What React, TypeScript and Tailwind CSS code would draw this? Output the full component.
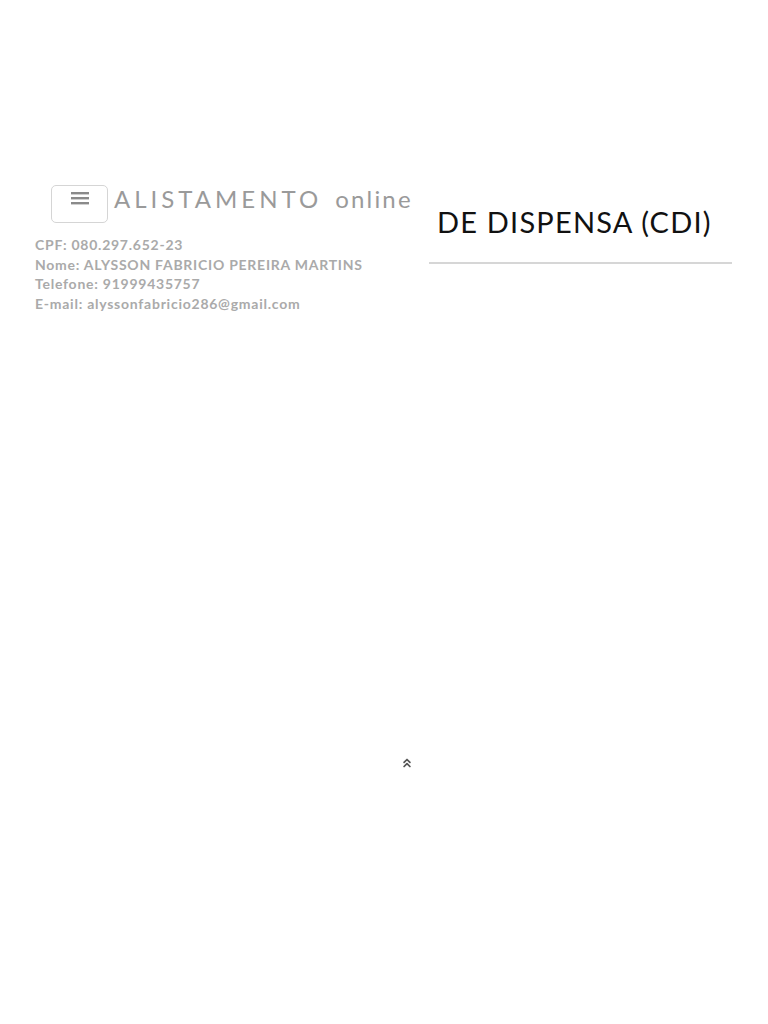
import { ChevronsUp } from 'lucide-react'

export default function App() {
  return (
    <div className="min-h-[1024px] bg-white" style={{ fontFamily: 'Lato, "Open Sans", sans-serif' }}>
      <div className="flex pt-[185px] pl-[35px]">
        {/* Left column */}
        <div className="w-[394px] shrink-0">
          <div className="flex items-start pl-[16px]">
            <button className="w-[57px] h-[38px] rounded-[5px] border border-[#d5d5d5] flex items-start justify-center pt-[4px]">
              <svg width="18" height="16" viewBox="0 0 18 16">
                <rect x="0" y="2" width="18" height="2.4" fill="#8a8a8a" />
                <rect x="0" y="7" width="18" height="2.4" fill="#8a8a8a" />
                <rect x="0" y="12" width="18" height="2.4" fill="#8a8a8a" />
              </svg>
            </button>
            <div className="ml-[6px] -mt-[1px] text-[24px] leading-[30px] text-[#9a9a9a] whitespace-nowrap">
              <span className="tracking-[4px]">ALISTAMENTO</span>
              <span className="ml-[13px] tracking-[2.2px]">online</span>
            </div>
          </div>
          <div className="mt-[12px] text-[14px] leading-[19.5px] font-bold tracking-[0.75px] text-[#aaaaaa]">
            <p>CPF: 080.297.652-23</p>
            <p>Nome: ALYSSON FABRICIO PEREIRA MARTINS</p>
            <p>Telefone: 91999435757</p>
            <p>E-mail: alyssonfabricio286@gmail.com</p>
          </div>
        </div>

        {/* Right column */}
        <div className="w-[303px] shrink-0 pt-[19px]">
          <h1 className="pl-[8px] text-[29px] leading-[36px] tracking-[1.2px] text-[#111111] whitespace-nowrap">DE DISPENSA (CDI)</h1>
          <div className="mt-[22px] h-[2px] bg-[#d6d6d6]" />
        </div>
      </div>

      <div className="flex pl-[400px] pt-[443px]">
        <ChevronsUp size={14} strokeWidth={3} className="text-[#555555]" />
      </div>
    </div>
  )
}
